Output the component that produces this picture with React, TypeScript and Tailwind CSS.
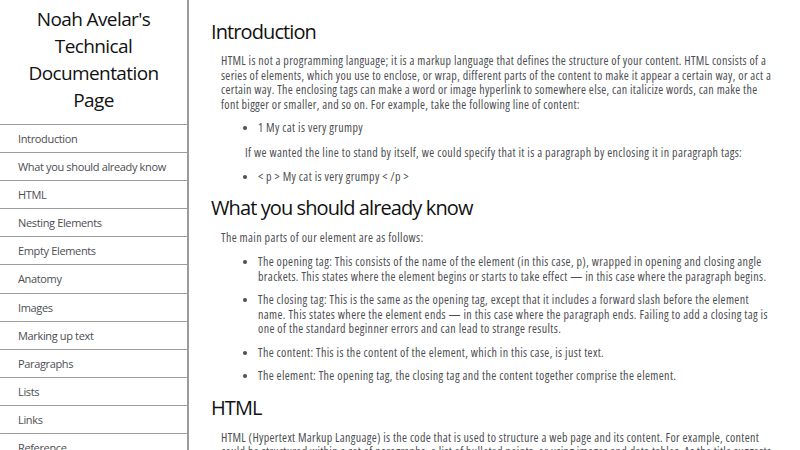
const navItems = [
  'Introduction',
  'What you should already know',
  'HTML',
  'Nesting Elements',
  'Empty Elements',
  'Anatomy',
  'Images',
  'Marking up text',
  'Paragraphs',
  'Lists',
  'Links',
  'Reference',
]

export default function App() {
  return (
    <div className="flex h-[450px] overflow-hidden bg-white font-['Open_Sans',sans-serif]">
      <nav className="w-[189px] shrink-0 border-r-2 border-[#9c9c9c] h-full">
        <header className="px-[22px] pt-[6px] pb-[10px] text-center text-[19px] leading-[27px] tracking-[-0.6px] text-[#111]">
          Noah Avelar's Technical Documentation Page
        </header>
        <ul>
          {navItems.map((item) => (
            <li key={item} className="border-t border-[#9c9c9c]">
              <a
                href="#"
                className="block pl-[18px] h-[27.1px] leading-[27px] text-[11px] tracking-[-0.35px] text-[#4d4e53]"
              >
                {item}
              </a>
            </li>
          ))}
        </ul>
      </nav>

      <main className="flex-1 pl-[22px] pr-[22.5px] pt-[19px]">
        <section id="Introduction">
          <h2 className="text-[20px] leading-[26px] tracking-[-0.9px] text-[#111]">Introduction</h2>
          <div className="pl-[10px] pt-[9px] text-[12px] leading-[14.5px] font-stretch-condensed tracking-[0.37px] text-[#4d4e53]">
            <p className="tracking-[0.32px]">
              HTML is not a programming language; it is a markup language that defines the structure of your content. HTML consists of a series of elements, which you use to enclose, or wrap, different parts of the content to make it appear a certain way, or act a certain way. The enclosing tags can make a word or image hyperlink to somewhere else, can italicize words, can make the font bigger or smaller, and so on. For example, take the following line of content:
            </p>
            <ul className="list-disc pl-[37px] mt-[9px]">
              <li>1 My cat is very grumpy</li>
            </ul>
            <p className="pl-[24px] mt-[10px]">
              If we wanted the line to stand by itself, we could specify that it is a paragraph by enclosing it in paragraph tags:
            </p>
            <ul className="list-disc pl-[37px] mt-[10px]">
              <li>&lt; p &gt; My cat is very grumpy &lt; /p &gt;</li>
            </ul>
          </div>
        </section>

        <section id="What_you_should_already_know" className="mt-[10px]">
          <h2 className="text-[20px] leading-[26px] tracking-[-0.9px] text-[#111]">What you should already know</h2>
          <div className="pl-[10px] pt-[10px] text-[12px] leading-[14.5px] font-stretch-condensed tracking-[0.37px] text-[#4d4e53]">
            <p>The main parts of our element are as follows:</p>
            <ul className="list-disc pl-[37px] mt-[10px] space-y-[9px]">
              <li>
                The opening tag: This consists of the name of the element (in this case, p), wrapped in opening and closing angle brackets. This states where the element begins or starts to take effect — in this case where the paragraph begins.
              </li>
              <li>
                The closing tag: This is the same as the opening tag, except that it includes a forward slash before the element name. This states where the element ends — in this case where the paragraph ends. Failing to add a closing tag is one of the standard beginner errors and can lead to strange results.
              </li>
              <li>The content: This is the content of the element, which in this case, is just text.</li>
              <li>The element: The opening tag, the closing tag and the content together comprise the element.</li>
            </ul>
          </div>
        </section>

        <section id="HTML" className="mt-[11px]">
          <h2 className="text-[20px] leading-[26px] tracking-[-0.9px] text-[#111]">HTML</h2>
          <div className="pl-[10px] pt-[10px] text-[12px] leading-[14.5px] font-stretch-condensed tracking-[0.32px] text-[#4d4e53]">
            <p>
              HTML (Hypertext Markup Language) is the code that is used to structure a web page and its content. For example, content could be structured within a set of paragraphs, a list of bulleted points, or using images and data tables. As the title suggests, this article will give you a basic understanding of HTML and its functions.
            </p>
          </div>
        </section>
      </main>
    </div>
  )
}
